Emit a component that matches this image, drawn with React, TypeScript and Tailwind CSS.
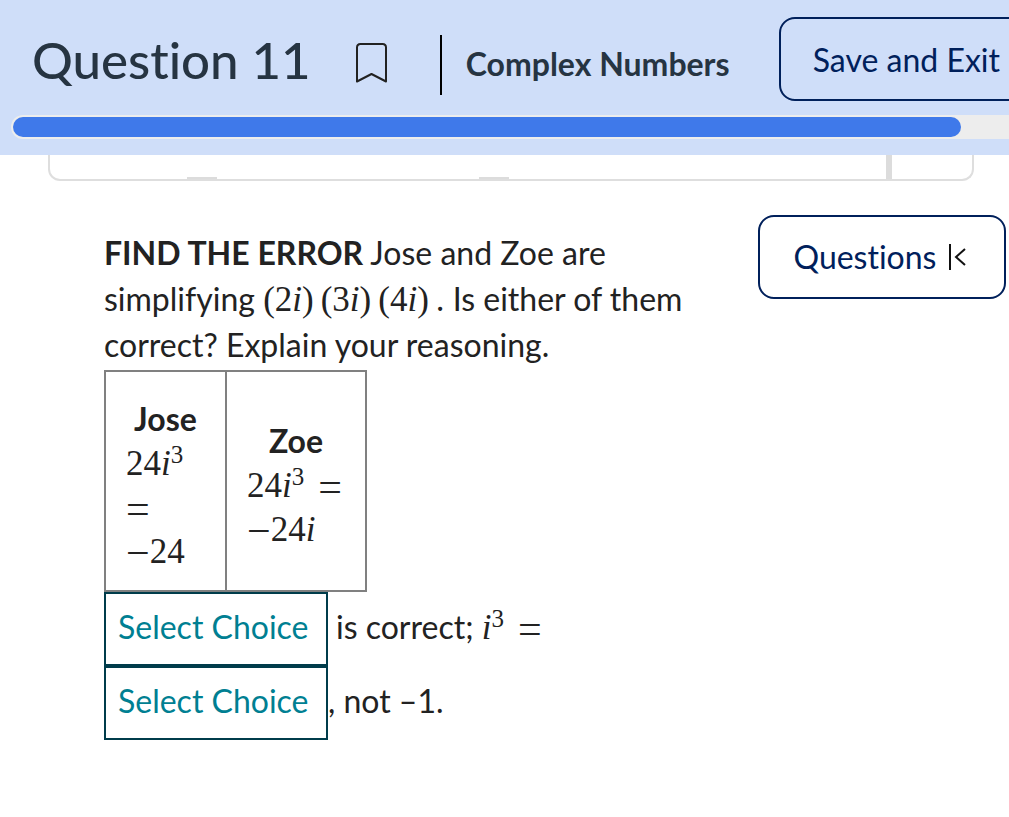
import type { ReactNode } from "react";
import { useState } from "react";

function MathText({ children }: { children: ReactNode }) {
    return <span className="font-['Liberation_Serif',serif] text-[35px] leading-none">{children}</span>;
}

function Operator({ children }: { children: ReactNode }) {
    return <span className="align-[-4px] text-[42px] leading-none">{children}</span>;
}

function ICubed() {
    return (
        <>
            <i>i</i>
            <sup className="-top-3 text-[25px]">3</sup>
        </>
    );
}

function ChoiceSelect({ label, options }: { label: string; options: string[] }) {
    const [value, setValue] = useState("");

    return (
        <select
            aria-label={label}
            value={value}
            onChange={(e) => setValue(e.target.value)}
            className="h-[74px] w-56 shrink-0 appearance-none border-2 border-[#003c4b] bg-white px-3 pb-1 text-[32px] text-[#007f92]"
        >
            <option value="">Select Choice</option>
            {options.map((option) => (
                <option key={option} value={option}>
                    {option}
                </option>
            ))}
        </select>
    );
}

function Header() {
    const [marked, setMarked] = useState(false);

    return (
        <header className="bg-[#cfdef9] pb-4">
            <div className="flex h-[115px] items-start whitespace-nowrap pl-8 pt-[17px] text-[#263442]">
                <h1 className="text-[51px] font-medium leading-[86px]">Question 11</h1>
                <button
                    type="button"
                    aria-label="Bookmark"
                    onClick={() => setMarked(!marked)}
                    className="ml-[45px] mt-6 shrink-0"
                >
                    <svg width="32" height="42" viewBox="0 0 32 42" fill={marked ? "#222" : "none"}>
                        <path
                            d="M1 40.5V6.5Q1 3 4.5 3H26.5Q30 3 30 6.5V40.5L15.5 33Z"
                            stroke="#222"
                            strokeWidth="2"
                            strokeLinejoin="round"
                        />
                    </svg>
                </button>
                <div className="ml-[52px] mt-[18px] h-[60px] w-0.5 shrink-0 bg-black" />
                <h2 className="ml-6 text-[32px] font-bold leading-[94px]">Complex Numbers</h2>
                <button
                    type="button"
                    className="-mr-[25px] ml-auto h-[84px] shrink-0 rounded-2xl border-2 border-[#00205b] px-8 pt-0.5 text-[32px] text-[#00205b]"
                >
                    Save and Exit
                </button>
            </div>
            <div className="-mr-9 ml-[11px] rounded-full bg-[#ededed] p-0.5">
                <div className="h-5 w-[92%] rounded-full bg-[#3f79ea]" />
            </div>
        </header>
    );
}

// Tail end of the scrolled video player frame
function PlayerFrame() {
    return (
        <div className="ml-12 mr-[35px] flex h-[26px] items-end rounded-b-xl border-2 border-t-0 border-[#dedede]">
            <div className="ml-[137px] h-0.5 w-[30px] bg-[#dcdcdc]" />
            <div className="ml-[262px] h-0.5 w-[30px] bg-[#dcdcdc]" />
            <div className="ml-auto mr-20 h-full w-1.5 bg-[#dcdcdc]" />
        </div>
    );
}

export default function App() {
    return (
        <div className="overflow-hidden bg-white font-['Lato',sans-serif] [font-variant-ligatures:none]">
            <Header />
            <PlayerFrame />
            <main className="flex items-start justify-between pb-[77px] pl-[104px] pr-[3px] pt-[34px] text-[32px] text-[#222]">
                <div className="pt-[15px]">
                    <p className="max-w-[600px] leading-[46px]">
                        <strong>FIND THE ERROR</strong> Jose and Zoe are
                        <br />
                        simplifying{" "}
                        <MathText>
                            (2<i>i</i>)&thinsp;(3<i>i</i>)&thinsp;(4<i>i</i>)&thinsp;.
                        </MathText>{" "}
                        Is either of them
                        <br />
                        correct? Explain your reasoning.
                    </p>
                    <table className="mt-0.5 h-[222px] border-collapse leading-[44px]">
                        <tbody>
                            <tr>
                                <td className="w-[121px] border-2 border-[#808080] px-5 pt-2">
                                    <div className="text-center font-bold">Jose</div>
                                    <div className="h-11"><MathText>24<ICubed /></MathText></div>
                                    <div className="h-11"><MathText><Operator>=</Operator></MathText></div>
                                    <div className="h-11"><MathText><Operator>−</Operator>24</MathText></div>
                                </td>
                                <td className="w-[140px] whitespace-nowrap border-2 border-[#808080] px-5 pt-2">
                                    <div className="text-center font-bold">Zoe</div>
                                    <div className="h-11"><MathText>24<ICubed />&thinsp;&thinsp;<Operator>=</Operator></MathText></div>
                                    <div className="h-11"><MathText><Operator>−</Operator>24<i>i</i></MathText></div>
                                </td>
                            </tr>
                        </tbody>
                    </table>
                    <div className="flex items-center">
                        <ChoiceSelect label="Who is correct" options={["Jose", "Zoe"]} />
                        <p className="ml-2 pb-1">
                            is correct; <MathText><ICubed />&thinsp;&thinsp;<Operator>=</Operator></MathText>
                        </p>
                    </div>
                    <div className="flex items-center">
                        <ChoiceSelect label="Value of i cubed" options={["i", "−i", "1"]} />
                        <p className="pb-1">, not –1.</p>
                    </div>
                </div>
                <button
                    type="button"
                    className="flex h-[84px] w-[248px] shrink-0 items-center justify-center gap-3 rounded-2xl border-2 border-[#00205b] pr-1 text-[32px] text-[#00205b]"
                >
                    Questions
                    <svg width="18" height="28" viewBox="0 0 18 28" fill="none" stroke="#111" strokeWidth="2">
                        <path d="M2 1V27M17 6L8 14L17 22" />
                    </svg>
                </button>
            </main>
        </div>
    );
}
